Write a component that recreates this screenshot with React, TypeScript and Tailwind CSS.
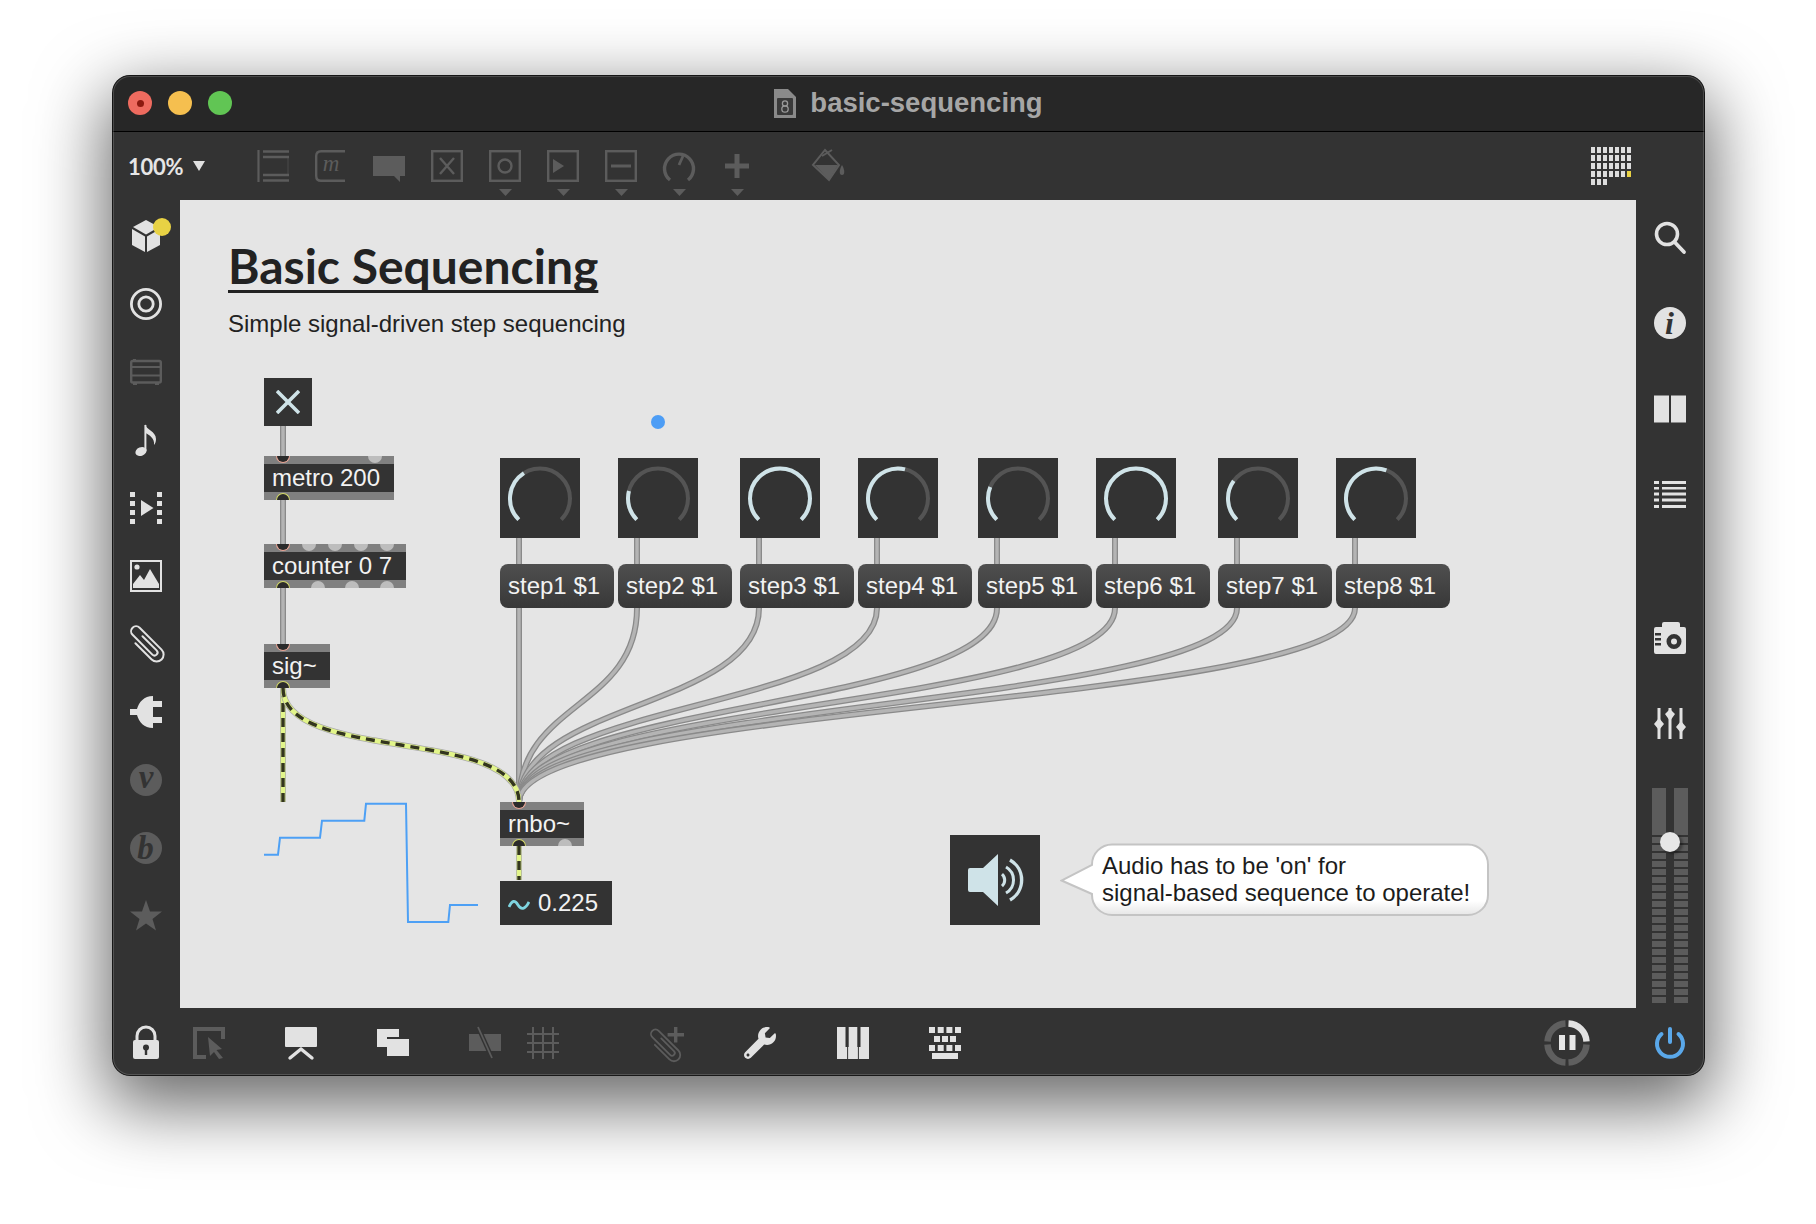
import React from "react";
import { FaWrench } from "react-icons/fa";

const L = "#e2e2e2";
const D = "#5c5c5c";
const BG = "#333333";

function Ic({ children, className = "" }: { children: React.ReactNode; className?: string }) {
  return (
    <svg viewBox="0 0 32 32" className={"w-8 h-8 shrink-0 overflow-visible " + className}>
      {children}
    </svg>
  );
}

function clip(color: string) {
  return (
    <g transform="rotate(-45 16 16)" fill="none" stroke={color} strokeWidth="2" strokeLinecap="round">
      <path d="M9 8 V31 a7 7 0 0 0 14 0 V0 a5 5 0 0 0 -10 0 V28 a3 3 0 0 0 6 0 V8" />
    </g>
  );
}

const leftIcons = [
  <Ic key="cube">
    <path fill={L} d="M16 0 L29 7 L16 14.5 L3 7 Z" />
    <path fill={L} d="M2 9 L15 16.5 V32 L2 25 Z" />
    <path fill={L} d="M17 16.5 L30 9 V25 L17 32 Z" />
    <circle cx="32" cy="7" r="9" fill="#e8d244" />
  </Ic>,
  <Ic key="target">
    <circle cx="16" cy="16" r="14.6" fill="none" stroke={L} strokeWidth="2.8" />
    <circle cx="16" cy="16" r="7.2" fill="none" stroke={L} strokeWidth="2.8" />
  </Ic>,
  <Ic key="amp">
    <rect x="1.2" y="5" width="29.6" height="21.5" rx="1.5" fill="none" stroke={D} strokeWidth="2.4" />
    <path d="M2 11 H30 M2 19.5 H30" stroke={D} strokeWidth="2.2" />
    <path d="M3 3 h3 v2 h-3 Z M3 27 h4 v2 h-4 Z M25 27 h4 v2 h-4 Z" fill={D} />
  </Ic>,
  <Ic key="note">
    <g transform="translate(3 0)">
      <ellipse cx="8" cy="27.5" rx="5.8" ry="4.2" transform="rotate(-22 8 27.5)" fill={L} />
      <path d="M12.4 27 V1" stroke={L} strokeWidth="2" />
      <path d="M12 0 C13 6 23 7 23 15 C23 18 22 20 21 21 C22 14 16 11 12.6 9 Z" fill={L} />
    </g>
  </Ic>,
  <Ic key="seq">
    <path
      fill={L}
      d="M0 0h5v5H0Z M0 9h5v5H0Z M0 18h5v5H0Z M0 27h5v5H0Z M27 0h5v5h-5Z M27 9h5v5h-5Z M27 18h5v5h-5Z M27 27h5v5h-5Z M11 8 L23.5 16 L11 24 Z"
    />
  </Ic>,
  <Ic key="img">
    <rect x="1" y="1" width="30" height="30" fill="none" stroke={L} strokeWidth="2" />
    <circle cx="7" cy="7" r="2.6" fill={L} />
    <path fill={L} d="M3 28 V24 L10 15 L14 20 L20 9 L29 24 V28 Z" />
  </Ic>,
  <Ic key="clip">{clip(L)}</Ic>,
  <Ic key="plug">
    <path
      fill={L}
      d="M23 0 V32 C14 32 9 26 7 19 H0 V13 H7 C9 6 14 0 23 0 Z M23 5 H32 V11 H23 Z M23 21 H32 V27 H23 Z"
    />
  </Ic>,
  <Ic key="v">
    <circle cx="16" cy="16" r="16" fill={D} />
    <text x="16" y="24" textAnchor="middle" fontSize="33" fontStyle="italic" fontWeight="700" fontFamily="'Liberation Serif',serif" fill={BG}>
      v
    </text>
  </Ic>,
  <Ic key="b">
    <circle cx="16" cy="16" r="16" fill={D} />
    <text x="15.5" y="27" textAnchor="middle" fontSize="33" fontStyle="italic" fontWeight="700" fontFamily="'Liberation Serif',serif" fill={BG}>
      b
    </text>
  </Ic>,
  <Ic key="star">
    <polygon fill={D} points="16,0 20,11.5 32,11.5 22.5,19 26,30.5 16,23.5 6,30.5 9.5,19 0,11.5 12,11.5" />
  </Ic>,
];

const toolIcons = [
  <g key="a" fill="none" stroke={D}>
    <path strokeWidth="2.2" d="M1.5 0 V32" />
    <path strokeWidth="2.4" d="M6 1.5 H32 M6 7 H32 M6 25 H32 M6 30.5 H32" />
    <path strokeWidth="1" strokeOpacity="0.6" d="M31 8 V24" />
  </g>,
  <g key="b">
    <path fill="none" stroke={D} strokeWidth="2.4" d="M30 1.2 H6 Q1.2 1.2 1.2 6 V26 Q1.2 30.8 6 30.8 H30" />
    <text x="16" y="21" textAnchor="middle" fontSize="23" fontStyle="italic" fontFamily="'Liberation Serif',serif" fill={D}>
      m
    </text>
  </g>,
  <path key="c" fill={D} d="M0 6 H32 V26 H27 V32 L21 26 H0 Z" />,
  <g key="d" fill="none" stroke={D} strokeWidth="2.4">
    <rect x="1.2" y="1.2" width="29.6" height="29.6" />
    <path d="M9 8 L23 24 M23 8 L9 24" />
  </g>,
  <g key="e" fill="none" stroke={D} strokeWidth="2.4">
    <rect x="1.2" y="1.2" width="29.6" height="29.6" />
    <circle cx="16" cy="16" r="6.5" />
  </g>,
  <g key="f">
    <rect x="1.2" y="1.2" width="29.6" height="29.6" fill="none" stroke={D} strokeWidth="2.4" />
    <polygon points="6,9 17,16 6,23" fill={D} />
  </g>,
  <g key="g" fill="none" stroke={D} strokeWidth="2.4">
    <rect x="1.2" y="1.2" width="29.6" height="29.6" />
    <path d="M6 16 H26" strokeWidth="3" />
  </g>,
  <g key="h" fill="none" stroke={D} strokeWidth="3.4">
    <path d="M7 30 A14.5 14.5 0 1 1 25 30" />
    <path d="M16 15 L20 6" strokeWidth="2.8" />
  </g>,
  <path key="i" fill={D} d="M13.5 4 H18.5 V13.5 H28 V18.5 H18.5 V28 H13.5 V18.5 H4 V13.5 H13.5 Z" />,
];

function Meter() {
  return (
    <div className="relative mt-12 flex gap-2">
      {[0, 1].map((i) => (
        <div key={i} className="w-[14px] flex flex-col gap-[2px]">
          <div className="h-[47px] bg-[#5c5c5c]" />
          <div className="h-[167px] bg-[repeating-linear-gradient(to_bottom,#5c5c5c_0px,#5c5c5c_6px,#333333_6px,#333333_8px)]" />
        </div>
      ))}
      <div className="absolute left-[8px] top-[44px] w-5 h-5 rounded-full bg-[#e6e6e6] shadow-[3px_2px_3px_rgba(0,0,0,0.35)]" />
    </div>
  );
}

const rightIcons = (
  <>
    <Ic>
      <circle cx="13" cy="13" r="10.5" fill="none" stroke={L} strokeWidth="3.6" />
      <path d="M20.5 21 L30 31" stroke={L} strokeWidth="3.8" strokeLinecap="round" />
    </Ic>
    <Ic className="mt-[54px]">
      <circle cx="16" cy="16" r="16" fill={L} />
      <text x="15.5" y="27" textAnchor="middle" fontSize="32" fontStyle="italic" fontWeight="700" fontFamily="'Liberation Serif',serif" fill={BG}>
        i
      </text>
    </Ic>
    <Ic className="mt-[54px]">
      <path fill={L} d="M0 2.5 H15 V29.5 H0 Z M17 2.5 H32 V29.5 H17 Z" />
    </Ic>
    <Ic className="mt-[54px]">
      <path
        fill={L}
        d="M0 2h5v3H0Z M0 8h5v2.5H0Z M0 13.5h5v3H0Z M0 19.5h5v3H0Z M0 26h5v3H0Z M8 2h24v3H8Z M8 8h24v2.5H8Z M8 13.5h24v3H8Z M8 19.5h24v3H8Z M8 26h24v3H8Z"
      />
    </Ic>
    <Ic className="mt-[111px]">
      <path
        fill={L}
        fillRule="evenodd"
        d="M8 5 V2 Q8 0 10 0 H24 Q26 0 26 2 V5 H30 Q32 5 32 7 V30 Q32 32 30 32 H2 Q0 32 0 30 V7 Q0 5 2 5 Z M1 11 V13.5 H7 V11 Z M1 16 V18.5 H7 V16 Z M1 21 V23.5 H7 V21 Z M20 12 A7.5 7.5 0 1 0 20 27 A7.5 7.5 0 1 0 20 12 Z M20 16.5 A3 3 0 1 1 20 22.5 A3 3 0 1 1 20 16.5 Z"
      />
    </Ic>
    <Ic className="mt-[54px]">
      <path d="M5 0 V31 M16 0 V31 M27 0 V31" stroke={L} strokeWidth="3" />
      <path fill={L} d="M5 10 L10 16 L5 22 L0 16 Z M16 1 L21 6 L16 13 L11 6 Z M27 13 L32 19 L27 25 L22 19 Z" />
    </Ic>
    <Meter />
  </>
);

const bottomGroup = [
  { ml: "", el: (
    <Ic key="lock">
      <path d="M7 14 V9 A9 9 0 0 1 25 9 V14" fill="none" stroke={L} strokeWidth="3" />
      <rect x="3" y="13" width="26" height="19" rx="2" fill={L} />
      <circle cx="16" cy="20.5" r="3" fill={BG} />
      <rect x="14.8" y="21" width="2.4" height="7" fill={BG} />
    </Ic>
  ) },
  { ml: "ml-[31px]", el: (
    <Ic key="cursor">
      <path fill="none" stroke={D} strokeWidth="4" d="M13 30 H2 V2 H30 V12" />
      <path fill={D} d="M15 10 L29 22 L23.5 23 L30 31 L26 32 L21 25 L17 29 Z" />
    </Ic>
  ) },
  { ml: "ml-[60px]", el: (
    <Ic key="pres">
      <rect x="0" y="0" width="32" height="20" rx="1" fill={L} />
      <path d="M16 22 L5 31 M16 22 L27 31" stroke={L} strokeWidth="3.4" strokeLinecap="round" />
    </Ic>
  ) },
  { ml: "ml-[60px]", el: (
    <Ic key="win">
      <path fill={L} d="M0 2 H22 V10 H10 V20 H0 Z" />
      <rect x="10" y="12" width="22" height="17" fill={L} />
    </Ic>
  ) },
  { ml: "ml-[60px]", el: (
    <Ic key="mute">
      <rect x="0" y="7" width="32" height="17" fill={D} />
      <path d="M9 0 L23 31" stroke={BG} strokeWidth="4.5" />
      <path d="M9 0 L23 31" stroke={D} strokeWidth="1.8" />
    </Ic>
  ) },
  { ml: "ml-[26px]", el: (
    <Ic key="grid">
      <path stroke={D} strokeWidth="2" d="M6 0 V32 M16 0 V32 M26 0 V32 M0 7 H32 M0 16 H32 M0 25 H32" />
    </Ic>
  ) },
  { ml: "ml-[93px]", el: (
    <Ic key="clipadd">
      <g transform="translate(-2 4) scale(0.9)">{clip(D)}</g>
      <path d="M22 0 h3.4 v6 h6.6 v3.4 h-6.6 v6 h-3.4 v-6 h-6.4 v-3.4 h6.4 Z" fill={D} />
    </Ic>
  ) },
  { ml: "ml-[60px]", el: <FaWrench key="w" className="w-8 h-8 text-[#e2e2e2] shrink-0" /> },
  { ml: "ml-[61px]", el: (
    <Ic key="piano">
      <path fill={L} d="M0 0 H8.5 V32 H0 Z M11.7 0 H20.3 V32 H11.7 Z M23.5 0 H32 V32 H23.5 Z M7 20 H25 V32 H7 Z" />
      <path stroke={BG} strokeWidth="1" d="M10.6 20 V32 M21.4 20 V32" />
    </Ic>
  ) },
  { ml: "ml-[60px]", el: (
    <Ic key="kbd">
      <path
        fill={L}
        d="M0 0h6v6H0Z M8.7 0h6v6h-6Z M17.4 0h6v6h-6Z M26 0h6v6h-6Z M5 9h6v6H5Z M13 9h6v6h-6Z M21 9h6v6h-6Z M0 18h6v6H0Z M8.7 18h6v6h-6Z M17.4 18h6v6h-6Z M26 18h6v6h-6Z M3 26h26v6H3Z"
      />
    </Ic>
  ) },
];

const stepData = [
  { x: 320, v: 0.38, dial: "left-[320px]", msg: "left-[320px]", text: "step1 $1" },
  { x: 438, v: 0.22, dial: "left-[438px]", msg: "left-[438px]", text: "step2 $1" },
  { x: 560, v: 1, dial: "left-[560px]", msg: "left-[560px]", text: "step3 $1" },
  { x: 678, v: 0.55, dial: "left-[678px]", msg: "left-[678px]", text: "step4 $1" },
  { x: 798, v: 0.25, dial: "left-[798px]", msg: "left-[798px]", text: "step5 $1" },
  { x: 916, v: 1, dial: "left-[916px]", msg: "left-[916px]", text: "step6 $1" },
  { x: 1038, v: 0.3, dial: "left-[1038px]", msg: "left-[1038px]", text: "step7 $1" },
  { x: 1156, v: 0.575, dial: "left-[1156px]", msg: "left-[1156px]", text: "step8 $1" },
];

function arc(v: number) {
  const cx = 40, cy = 40.5, r = 30;
  const p = (t: number) => {
    const a = ((-135 + 270 * t) * Math.PI) / 180;
    return `${(cx + r * Math.sin(a)).toFixed(2)} ${(cy - r * Math.cos(a)).toFixed(2)}`;
  };
  return `M${p(0)} A${r} ${r} 0 ${270 * v > 180 ? 1 : 0} 1 ${p(v)}`;
}

function Dial({ v }: { v: number }) {
  return (
    <svg viewBox="0 0 80 80" className="w-full h-full">
      <path d={arc(1)} fill="none" stroke="#545454" strokeWidth="4" />
      <path d={arc(v)} fill="none" stroke="#cfe3e8" strokeWidth="4" />
    </svg>
  );
}

function Cord({ d }: { d: string }) {
  return (
    <g fill="none">
      <path d={d} stroke="#8a8a8a" strokeWidth="6" />
      <path d={d} stroke="#b4b4b4" strokeWidth="3.4" />
    </g>
  );
}

function Sig({ d }: { d: string }) {
  return (
    <g fill="none">
      <path d={d} stroke="#a8a8a8" strokeWidth="6" />
      <path d={d} stroke="#e2f58a" strokeWidth="4.6" />
      <path d={d} stroke="#33351f" strokeWidth="3.4" strokeDasharray="9 6" />
    </g>
  );
}

function Inlet({ className }: { className: string }) {
  return (
    <div className={"absolute top-0 w-[14px] h-[7px] rounded-b-full bg-[#2b2b2b] border-[1.5px] border-t-0 border-[#eba696] " + className} />
  );
}
function Outlet({ className }: { className: string }) {
  return (
    <div className={"absolute bottom-0 w-[14px] h-[7px] rounded-t-full bg-[#2b2b2b] border-[1.5px] border-b-0 border-[#d6dc68] " + className} />
  );
}
function Free({ className, top }: { className: string; top?: boolean }) {
  return (
    <div className={(top ? "top-0 rounded-b-full " : "bottom-0 rounded-t-full ") + "absolute w-[14px] h-[7px] bg-[#bdbdbd] " + className} />
  );
}

function Obj({ className, text, children }: { className: string; text: string; children?: React.ReactNode }) {
  return (
    <div className={"absolute h-11 flex flex-col " + className}>
      <div className="h-2 bg-[#808080]" />
      <div className="flex-1 bg-[#333333] pl-2 text-2xl leading-[28px] text-[#f2f2f2] whitespace-nowrap">{text}</div>
      <div className="h-2 bg-[#808080]" />
      {children}
    </div>
  );
}

export default function App() {
  return (
    <div className="w-[1816px] h-[1224px] overflow-hidden bg-white pt-[75px] pl-[112px] [font-family:'Liberation_Sans',sans-serif]">
      <div className="relative w-[1593px] h-[1001px] rounded-[18px] overflow-hidden flex flex-col shadow-[0_24px_70px_6px_rgba(0,0,0,0.6)]">
        {/* title bar */}
        <div className="h-[57px] shrink-0 bg-[#272727] border-b border-black grid grid-cols-[1fr_auto_1fr] items-center">
          <div className="flex gap-4 pl-4">
            <div className="w-6 h-6 rounded-full bg-[#ee6b5f] flex items-center justify-center">
              <div className="w-[7px] h-[7px] rounded-full bg-[#8c1a10]" />
            </div>
            <div className="w-6 h-6 rounded-full bg-[#f5bf4f]" />
            <div className="w-6 h-6 rounded-full bg-[#61c554]" />
          </div>
          <div className="flex items-center gap-[14px]">
            <svg viewBox="0 0 22 29" className="w-[22px] h-[29px]">
              <path d="M0 0 H14 L22 8 V29 H0 Z" fill="#8a8a8a" />
              <rect x="3" y="9" width="16" height="17" rx="1" fill="#3a3a3a" />
              <circle cx="11" cy="14.5" r="2.6" fill="none" stroke="#9a9a9a" strokeWidth="1.3" />
              <circle cx="11" cy="20" r="3.2" fill="none" stroke="#9a9a9a" strokeWidth="1.3" />
            </svg>
            <span className="text-[27.5px] font-bold text-[#a6a6a6] leading-none">basic-sequencing</span>
          </div>
          <div />
        </div>

        {/* toolbar */}
        <div className="h-[68px] shrink-0 bg-[#333333] flex items-center pr-[74px]">
          <div className="w-[145px] pl-4 flex items-center gap-[10px] text-[#e6e6e6]">
            <span className="text-[22px] font-bold tracking-[-0.3px] [font-family:Lato,sans-serif]">100%</span>
            <svg viewBox="0 0 12 10" className="w-3 h-[10px]">
              <polygon points="0,0 12,0 6,10" fill="#e0e0e0" />
            </svg>
          </div>
          <div className="flex gap-[26px]">
            {toolIcons.map((ic, i) => (
              <div key={i} className="relative w-8 h-8">
                <Ic>{ic}</Ic>
                {i >= 4 && (
                  <svg viewBox="0 0 13 7" className="absolute left-[10px] top-[39px] w-[13px] h-[7px]">
                    <polygon points="0,0 13,0 6.5,7" fill={D} />
                  </svg>
                )}
              </div>
            ))}
          </div>
          <Ic className="ml-[60px]">
            <path d="M12 0 L26 15 L16 30 L0 15 Z" fill="none" stroke={D} strokeWidth="2" />
            <path d="M2 15 H25 L16 30 Z" fill={D} />
            <path d="M9 6 L19 0" stroke={D} strokeWidth="2" />
            <path d="M29 15 C26 20 26 25 29 25 C32 25 32 20 29 15 Z" fill={D} />
          </Ic>
          <div className="ml-auto grid grid-cols-7 gap-x-[2px] gap-y-[2px]">
            {Array.from({ length: 31 }).map((_, i) => (
              <div key={i} className={"w-1 h-[6px] " + (i === 27 ? "bg-[#e8d244]" : "bg-[#dddddd]")} />
            ))}
          </div>
        </div>

        {/* middle */}
        <div className="h-[808px] shrink-0 flex">
          <div className="w-[68px] shrink-0 bg-[#333333] flex flex-col items-center pt-5 gap-9">{leftIcons}</div>

          <div className="relative flex-1 bg-[#e5e5e5] overflow-hidden">
            <svg className="absolute inset-0 w-full h-full">
              <Cord d="M103 226 V256" />
              <Cord d="M103 300 V344" />
              <Cord d="M103 388 V444" />
              {stepData.map((s) => (
                <Cord key={s.x} d={`M${s.x + 19} 338 V364`} />
              ))}
              {stepData.map((s, i) => (
                <Cord
                  key={s.x}
                  d={i === 0 ? "M339 408 V602" : `M${s.x + 19} 408 C${s.x + 19} 508 339 502 339 602`}
                />
              ))}
              <Sig d="M103 488 V602" />
              <Sig d="M103 488 C103 563 339 527 339 602" />
              <Sig d="M339 646 V680" />
              <polyline
                fill="none"
                stroke="#4da0f5"
                strokeWidth="2"
                points="84,654.7 98,654.7 100,637.7 140,637.7 142,620.7 184.3,620.7 186,603.7 226,603.7 228,722 268.3,722 270,705 298,705"
              />
            </svg>

            <div className="absolute left-[48px] top-[36px] text-[48px] leading-[60px] font-bold text-[#222222] underline decoration-[3px] underline-offset-[6px] [text-decoration-skip-ink:none] [font-family:Lato,sans-serif] whitespace-nowrap">
              Basic Sequencing
            </div>
            <div className="absolute left-[48px] top-[110px] text-2xl leading-[28px] text-[#222222] whitespace-nowrap">
              Simple signal-driven step sequencing
            </div>

            <div className="absolute left-[84px] top-[178px] w-12 h-12 bg-[#333333] p-3">
              <svg viewBox="0 0 24 24" className="w-full h-full">
                <path d="M1 1 L23 23 M23 1 L1 23" stroke="#cfe3e8" strokeWidth="3.6" />
              </svg>
            </div>

            <Obj className="left-[84px] top-[256px] w-[130px]" text="metro 200">
              <Inlet className="left-3" />
              <Free top className="left-[104px]" />
              <Outlet className="left-3" />
            </Obj>
            <Obj className="left-[84px] top-[344px] w-[142px]" text="counter 0 7">
              <Inlet className="left-3" />
              <Free top className="left-[38px]" />
              <Free top className="left-[64px]" />
              <Free top className="left-[90px]" />
              <Free top className="left-[116px]" />
              <Outlet className="left-3" />
              <Free className="left-[47px]" />
              <Free className="left-[81px]" />
              <Free className="left-[116px]" />
            </Obj>
            <Obj className="left-[84px] top-[444px] w-[66px]" text="sig~">
              <Inlet className="left-3" />
              <Outlet className="left-3" />
            </Obj>
            <Obj className="left-[320px] top-[602px] w-[84px]" text="rnbo~">
              <Inlet className="left-3" />
              <Outlet className="left-3" />
              <Free className="left-[58px]" />
            </Obj>

            <div className="absolute left-[320px] top-[681px] w-[112px] h-11 bg-[#333333] flex items-center pl-2 gap-2">
              <svg viewBox="0 0 22 12" className="w-[22px] h-3 mt-[3px]">
                <path d="M1 8 C4 1 7 1 10 6 C13 11 17 11 21 3" fill="none" stroke="#7fd5e0" strokeWidth="2.8" />
              </svg>
              <span className="text-2xl text-[#f2f2f2]">0.225</span>
            </div>

            <div className="absolute left-[471px] top-[215px] w-[14px] h-[14px] rounded-full bg-[#4d9df5]" />

            {stepData.map((s) => (
              <div key={s.x} className={"absolute top-[258px] w-20 h-20 bg-[#333333] " + s.dial}>
                <Dial v={s.v} />
              </div>
            ))}
            {stepData.map((s) => (
              <div
                key={s.x}
                className={"absolute top-[364px] w-[114px] h-11 rounded-lg bg-gradient-to-b from-[#4f4f4f] to-[#383838] pl-2 flex items-center text-2xl text-[#f2f2f2] whitespace-nowrap " + s.msg}
              >
                {s.text}
              </div>
            ))}

            <div className="absolute left-[770px] top-[635px] w-[90px] h-[90px] bg-[#333333]">
              <svg viewBox="0 0 90 90" className="w-full h-full">
                <path fill="#cfe3e8" d="M20 33 H33 L48 19 V71 L33 57 H20 Q18 57 18 55 V35 Q18 33 20 33 Z" />
                <g fill="none" stroke="#cfe3e8" strokeWidth="3">
                  <path d="M52 39 A8 8 0 0 1 52 51" />
                  <path d="M56 32 A15 15 0 0 1 56 58" />
                  <path d="M60 25 A23 23 0 0 1 60 65" strokeWidth="3.4" />
                </g>
              </svg>
            </div>

            <div className="absolute left-[880px] top-[643px] w-[430px] h-[75px]">
              <svg viewBox="0 0 430 75" className="absolute inset-0 w-full h-full">
                <defs>
                  <linearGradient id="bub" x1="0" y1="0" x2="0" y2="1">
                    <stop offset="0.8" stopColor="#ffffff" />
                    <stop offset="1" stopColor="#e6e6e6" />
                  </linearGradient>
                </defs>
                <path
                  d="M52 1.5 H408 A20 20 0 0 1 428 21.5 V52 A20 20 0 0 1 408 72 H52 A20 20 0 0 1 32 52 V51 L1.5 37.5 L32 22 V21.5 A20 20 0 0 1 52 1.5 Z"
                  fill="url(#bub)"
                  stroke="#c4c4c4"
                  strokeWidth="2"
                />
              </svg>
              <div className="absolute left-[42px] top-[9px] text-2xl leading-[27px] text-[#1c1c1c] whitespace-nowrap">
                Audio has to be 'on' for
                <br />
                signal-based sequence to operate!
              </div>
            </div>
          </div>

          <div className="w-[69px] shrink-0 bg-[#333333] flex flex-col items-center pt-[21px] pr-px">{rightIcons}</div>
        </div>

        {/* bottom */}
        <div className="h-[68px] shrink-0 bg-[#333333] flex items-center pl-[18px] pr-[19px] pt-[2px]">
          {bottomGroup.map((b, i) => (
            <div key={i} className={b.ml}>
              {b.el}
            </div>
          ))}
          <svg viewBox="0 0 46 46" className="ml-auto w-[46px] h-[46px]">
            <g fill="none" strokeWidth="6.5">
              <path d="M3.5 21.5 A19 19 0 0 1 21.5 3.5" stroke="#5f5f5f" />
              <path d="M24.5 3.5 A19 19 0 0 1 42.5 21.5" stroke="#e2e2e2" />
              <path d="M42.5 24.5 A19 19 0 0 1 24.5 42.5" stroke="#5f5f5f" />
              <path d="M21.5 42.5 A19 19 0 0 1 3.5 24.5" stroke="#5f5f5f" />
            </g>
            <rect x="15" y="15" width="6" height="15" fill="#e6e6e6" />
            <rect x="25.5" y="15" width="6" height="15" fill="#e6e6e6" />
          </svg>
          <Ic className="ml-16">
            <path d="M7.5 7 A13 13 0 1 0 24.5 7" fill="none" stroke="#5aa8ea" strokeWidth="4" strokeLinecap="round" />
            <path d="M16 2 V15" stroke="#5aa8ea" strokeWidth="4" strokeLinecap="round" />
          </Ic>
        </div>

        <div className="pointer-events-none absolute inset-0 rounded-[18px] shadow-[inset_0_0_0_1px_rgba(0,0,0,0.7),inset_0_0_0_2px_rgba(255,255,255,0.16)]" />
      </div>
    </div>
  );
}
